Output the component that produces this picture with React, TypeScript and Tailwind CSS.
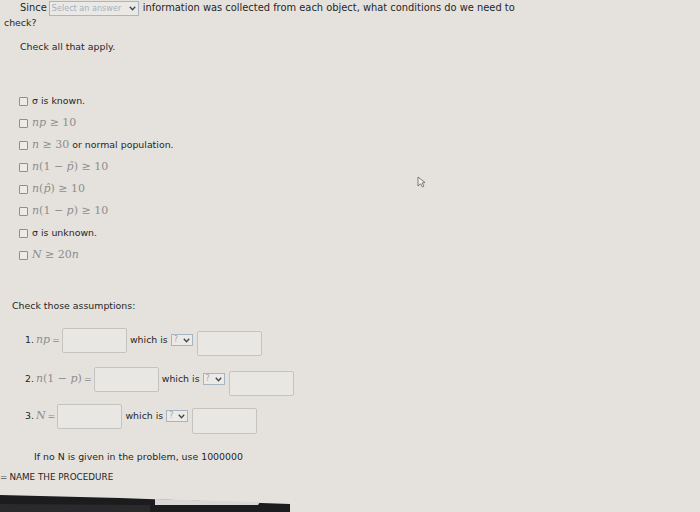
import React from "react";

const Chevron = () => (
  <svg width="7" height="5" viewBox="0 0 7 5" className="shrink-0">
    <polyline points="0.8,0.8 3.5,3.8 6.2,0.8" fill="none" stroke="#3b4450" strokeWidth="1.3" />
  </svg>
);

const Box = () => (
  <span className="inline-block w-[9px] h-[9px] border border-[#8e8e8e] rounded-[1px] bg-[#ecebe8] shrink-0" />
);

const V = ({ children }: { children: React.ReactNode }) => <i className="italic">{children}</i>;

const Math = ({ children }: { children: React.ReactNode }) => (
  <span className="text-[11px] text-[#8e8e8e]" style={{ fontFamily: '"DejaVu Serif", "Liberation Serif", serif' }}>
    {children}
  </span>
);

const SmallSelect = () => (
  <span className="flex items-center justify-between w-[22px] h-[12px] border border-[#a7b4c2] bg-[#eceae6] px-[2px] text-[8px] text-[#9aa8b6]">
    ?<Chevron />
  </span>
);

const Field = ({ className = "" }: { className?: string }) => (
  <span className={"block w-[65px] border border-[#c4c3c0] rounded-[2px] bg-[#e9e7e3] shrink-0 " + className} />
);

const items: React.ReactNode[] = [
  <span>σ is known.</span>,
  <Math>
    <V>np</V> ≥ 10
  </Math>,
  <span>
    <Math>
      <V>n</V> ≥ 30
    </Math>{" "}
    or normal population.
  </span>,
  <Math>
    <V>n</V>(1 − <V>p̂</V>) ≥ 10
  </Math>,
  <Math>
    <V>n</V>(<V>p̂</V>) ≥ 10
  </Math>,
  <Math>
    <V>n</V>(1 − <V>p</V>) ≥ 10
  </Math>,
  <span>σ is unknown.</span>,
  <Math>
    <V>N</V> ≥ 20<V>n</V>
  </Math>,
];

type Row = { num: string; label: React.ReactNode; top: string; drop: string };

const rows: Row[] = [
  { num: "1.", label: <V>np</V>, top: "mt-[15px]", drop: "mt-[3px] h-[25px]" },
  {
    num: "2.",
    label: (
      <>
        <V>n</V>(1 − <V>p</V>)
      </>
    ),
    top: "mt-[11px]",
    drop: "mt-[4px] h-[25px]",
  },
  { num: "3.", label: <V>N</V>, top: "mt-[8px]", drop: "mt-[4px] h-[26px]" },
];

export default function App() {
  return (
    <div
      className="relative w-[700px] h-[512px] overflow-hidden bg-[#e5e2dd] text-[9.4px] text-[#262626]"
      style={{ fontFamily: '"DejaVu Sans", Verdana, sans-serif' }}
    >
      <div className="h-[16px] pl-[20px] flex items-center gap-[2px] text-[9.9px]">
        <span>Since</span>
        <span className="flex items-center justify-between gap-[2px] w-[90px] h-[15px] border border-[#a9b6c4] bg-[#ebe9e5] px-[2px] text-[8.1px] whitespace-nowrap text-[#a4b1be]">
          Select an answer
          <Chevron />
        </span>
        <span className="ml-[2px] whitespace-nowrap">
          information was collected from each object, what conditions do we need to
        </span>
      </div>
      <div className="h-[14px] pl-[4px] flex items-center">check?</div>
      <div className="h-[14px] mt-[10px] pl-[20px] flex items-center">Check all that apply.</div>

      <div className="mt-[36px] flex flex-col">
        {items.map((it, i) => (
          <div key={i} className="h-[22px] pl-[19px] flex items-center gap-[4px]">
            <Box />
            {it}
          </div>
        ))}
      </div>

      <div className="h-[14px] mt-[33px] pl-[12px] flex items-center">Check those assumptions:</div>

      <div className="flex flex-col">
        {rows.map((r, i) => (
          <div key={i} className={"flex items-start pl-[25px] " + r.top}>
            <span className="h-[25px] flex items-center gap-[2px] pr-[2px]">
              <span>{r.num}</span>
              <Math>{r.label}</Math>
              <span className="text-[#8b8b8b]">=</span>
            </span>
            <Field className="h-[25px]" />
            <span className="h-[25px] flex items-center px-[3px]">which is</span>
            <span className="mt-[6px]">
              <SmallSelect />
            </span>
            <Field className={"ml-[4px] " + r.drop} />
          </div>
        ))}
      </div>

      <div className="h-[14px] mt-[16px] pl-[34px] flex items-center">If no N is given in the problem, use 1000000</div>
      <div className="h-[14px] mt-[7px] flex items-center text-[8.8px]">
        <span className="text-[#555]">=</span>
        <span className="ml-[2px]">NAME THE PROCEDURE</span>
      </div>

      <svg width="700" height="22" viewBox="0 0 700 22" className="block mt-[5px]">
        <polygon points="0,5 120,8 230,12 290,14 290,22 0,22" fill="#1c1c1e" />
        <polygon points="155,9 260,12 258,15 155,15" fill="#d9d8d6" />
        <polygon points="0,14 150,15 150,22 0,22" fill="#2a2a2d" />
      </svg>

      <svg width="10" height="12" viewBox="0 0 10 12" className="absolute left-[417px] top-[176px]">
        <polygon points="1,1 1,10 3.5,7.8 5.5,11 7,10 5,7 8,6.5" fill="#f2f1ee" stroke="#6b6b6b" strokeWidth="0.9" />
      </svg>
    </div>
  );
}
